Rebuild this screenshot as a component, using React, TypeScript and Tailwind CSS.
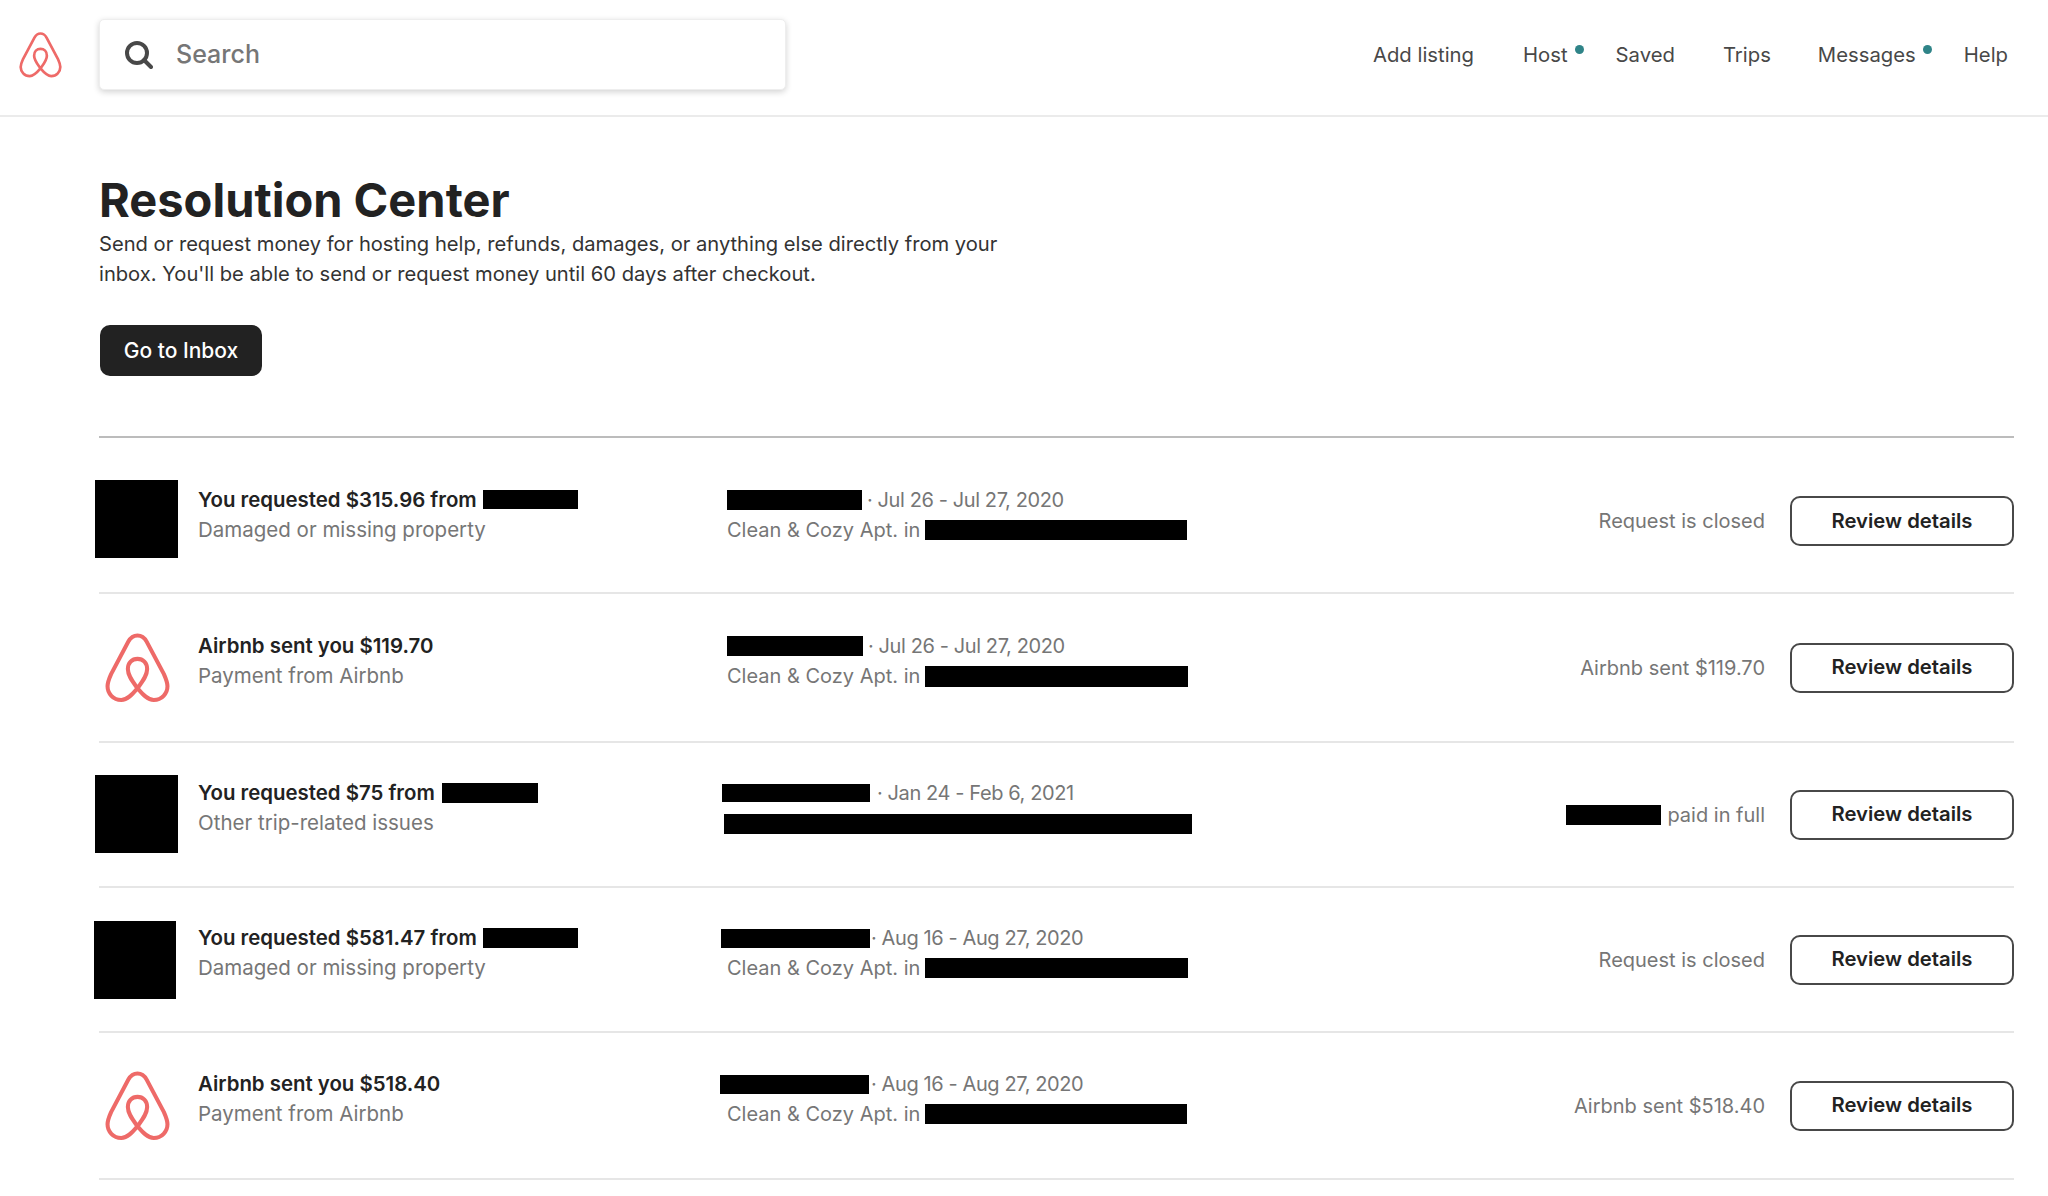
function Belo({ className }: { className: string }) {
  return (
    <svg viewBox="0 0 64 68" fill="none" className={className}>
      <path
        d="M32 54C37 60 42 65.5 48 65.5C56 65.5 61.5 59 61.5 52C61.5 48 60 44.5 58 40L41 8C38.5 3.5 35.5 2 32 2C28.5 2 25.5 3.5 23 8L6 40C4 44.5 2.5 48 2.5 52C2.5 59 8 65.5 16 65.5C22 65.5 27 60 32 54C37 47 41.5 41.5 41.5 35C41.5 29 37.5 25 32 25C26.5 25 22.5 29 22.5 35C22.5 41.5 27 47 32 54Z"
        stroke="#EE6A68"
        strokeWidth="4"
        strokeLinejoin="round"
      />
    </svg>
  );
}

function Bar({ className }: { className: string }) {
  return <span className={`block shrink-0 bg-black ${className}`} />;
}

function NavItem({ label, className, dot }: { label: string; className: string; dot?: boolean }) {
  return (
    <a className={`relative text-[20.3px] leading-[30px] text-[#484848] ${className}`}>
      {label}
      {dot && <span className="absolute -right-[16px] top-[5px] h-[9px] w-[9px] rounded-full bg-[#2f8488]" />}
    </a>
  );
}

type Row = {
  rowClass: string;
  avatar: string | null;
  title: string;
  titleBar?: string;
  sub: string;
  nameBar: string;
  dates: string;
  dateClass?: string;
  placeBar: string;
  clean: boolean;
  status: string;
  statusBar?: boolean;
};

const rows: Row[] = [
  {
    rowClass: "h-[156px] pt-[12px]",
    avatar: "-ml-[4px] mt-[-4px] h-[78px] w-[83px]",
    title: "You requested $315.96 from",
    titleBar: "ml-[6px] h-[19px] w-[95px]",
    sub: "Damaged or missing property",
    nameBar: "h-[20px] w-[135px]",
    dates: "Jul 26 - Jul 27, 2020",
    placeBar: "ml-[5px] h-[20px] w-[262px]",
    clean: true,
    status: "Request is closed",
  },
  {
    rowClass: "h-[149px]",
    avatar: null,
    title: "Airbnb sent you $119.70",
    sub: "Payment from Airbnb",
    nameBar: "h-[20px] w-[136px]",
    dates: "Jul 26 - Jul 27, 2020",
    placeBar: "ml-[5px] h-[21px] w-[263px]",
    clean: true,
    status: "Airbnb sent $119.70",
  },
  {
    rowClass: "h-[145px]",
    avatar: "-ml-[4px] -mt-[1px] h-[78px] w-[83px]",
    title: "You requested $75 from",
    titleBar: "ml-[7px] h-[20px] w-[96px]",
    sub: "Other trip-related issues",
    nameBar: "-ml-[5px] h-[18px] w-[148px]",
    dates: "Jan 24 - Feb 6, 2021",
    dateClass: "ml-[7px]",
    placeBar: "-ml-[3px] mt-[2px] h-[20px] w-[468px]",
    clean: false,
    status: "paid in full",
    statusBar: true,
  },
  {
    rowClass: "h-[145px]",
    avatar: "-ml-[5px] h-[78px] w-[82px]",
    title: "You requested $581.47 from",
    titleBar: "ml-[6px] h-[20px] w-[95px]",
    sub: "Damaged or missing property",
    nameBar: "-ml-[6px] h-[19px] w-[149px]",
    dates: "Aug 16 - Aug 27, 2020",
    dateClass: "ml-[1px]",
    placeBar: "ml-[5px] h-[20px] w-[263px]",
    clean: true,
    status: "Request is closed",
  },
  {
    rowClass: "h-[147px]",
    avatar: null,
    title: "Airbnb sent you $518.40",
    sub: "Payment from Airbnb",
    nameBar: "-ml-[7px] h-[19px] w-[149px]",
    dates: "Aug 16 - Aug 27, 2020",
    dateClass: "ml-[2px]",
    placeBar: "ml-[5px] h-[20px] w-[262px]",
    clean: true,
    status: "Airbnb sent $518.40",
  },
];

export default function App() {
  return (
    <div className="min-h-[1196px] bg-white font-['Inter',sans-serif] text-[#222]">
      {/* Top bar */}
      <header className="flex h-[117px] items-center border-b-2 border-[#ebebeb] pb-[6px]">
        <Belo className="ml-[19px] h-[46px] w-[43px]" />
        <div className="ml-[37px] flex h-[71px] w-[687px] items-center rounded-[5px] border border-[#eeeeee] bg-white pl-[25px] shadow-[0_2px_6px_rgba(0,0,0,0.18)]">
          <svg viewBox="0 0 28 28" fill="none" className="h-[28px] w-[28px]">
            <circle cx="12" cy="12" r="10" stroke="#484848" strokeWidth="4" />
            <path d="M19 19L26 26" stroke="#484848" strokeWidth="4" strokeLinecap="round" />
          </svg>
          <span className="ml-[23px] text-[25px] font-medium text-[#767676]">Search</span>
        </div>
        <nav className="ml-auto flex items-center pr-[40px]">
          <NavItem label="Add listing" className="" />
          <NavItem label="Host" className="ml-[49px]" dot />
          <NavItem label="Saved" className="ml-[48px]" />
          <NavItem label="Trips" className="ml-[48px]" />
          <NavItem label="Messages" className="ml-[47px]" dot />
          <NavItem label="Help" className="ml-[48px]" />
        </nav>
      </header>

      <main className="pl-[99px] pr-[34px]">
        <h1 className="mt-[54px] text-[47px] font-bold leading-[58px] text-[#222]">Resolution Center</h1>
        <p className="w-[960px] text-[20.15px] leading-[30px] text-[#333]">
          Send or request money for hosting help, refunds, damages, or anything else directly from your
          <br />
          inbox. You'll be able to send or request money until 60 days after checkout.
        </p>
        <button className="ml-px mt-[36px] block h-[51px] w-[162px] rounded-[10px] bg-[#222] text-[21px] font-medium text-white">
          Go to Inbox
        </button>

        <div className="mt-[60px] border-b-2 border-[#bcbcbc]" />

        {rows.map((row) => (
          <div key={row.title} className={`flex items-center border-b-2 border-[#e6e6e6] ${row.rowClass}`}>
            <div className="w-[99px] shrink-0">
              {row.avatar ? (
                <div className={`bg-black ${row.avatar}`} />
              ) : (
                <Belo className="ml-[6px] h-[70px] w-[65px]" />
              )}
            </div>

            <div className="mb-[13px] w-[529px] shrink-0 leading-[30px]">
              <div className="flex items-center text-[20.4px] font-semibold text-[#222]">
                {row.title}
                {row.titleBar && <Bar className={row.titleBar} />}
              </div>
              <div className="text-[20.5px] text-[#767676]">{row.sub}</div>
            </div>

            <div className="mb-[13px] flex-1 text-[20px] leading-[30px] text-[#767676]">
              <div className="flex h-[30px] items-center">
                <Bar className={row.nameBar} />
                <span className={`tracking-[-0.4px] ${row.dateClass ?? "ml-[5px]"}`}>· {row.dates}</span>
              </div>
              <div className="flex h-[30px] items-center">
                {row.clean && "Clean & Cozy Apt. in"}
                <Bar className={row.placeBar} />
              </div>
            </div>

            <div className="flex items-center text-[20px] text-[#767676]">
              {row.statusBar && <Bar className="mr-[6px] h-[20px] w-[95px]" />}
              {row.status}
            </div>
            <button className="ml-[25px] h-[50px] w-[224px] shrink-0 rounded-[10px] border-2 border-[#484848] bg-white text-[20.3px] font-semibold text-[#222]">
              Review details
            </button>
          </div>
        ))}
      </main>
    </div>
  );
}
